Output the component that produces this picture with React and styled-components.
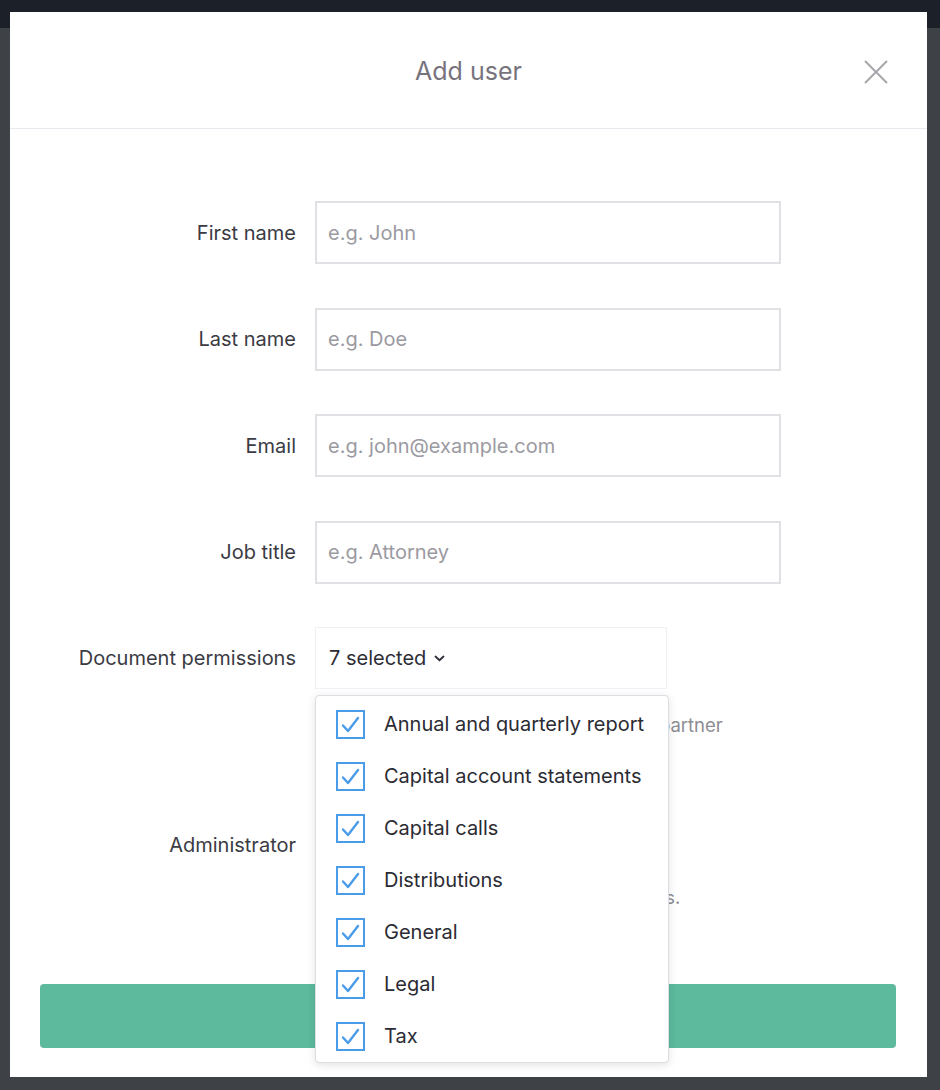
import React from 'react';
import styled, { createGlobalStyle } from 'styled-components';

const GlobalStyle = createGlobalStyle`
  html, body {
    margin: 0;
    padding: 0;
    background: #3e4146;
    font-family: Inter, "Noto Sans", sans-serif;
  }
  * { box-sizing: border-box; }
`;

const Page = styled.div`
  position: relative;
  width: 940px;
  height: 1090px;
  background: #3e4146;
  overflow: hidden;
`;

const TopBar = styled.div`
  height: 28px;
  background: #1c2129;
`;

const Modal = styled.div`
  position: absolute;
  top: 12px;
  left: 10px;
  width: 917px;
  height: 1065px;
  background: #fff;
  display: flex;
  flex-direction: column;
`;

const Header = styled.div`
  height: 117px;
  border-bottom: 1px solid #e7eaee;
  display: flex;
  align-items: center;
  justify-content: center;
  position: relative;
`;

const Title = styled.h2`
  margin: 0;
  font-size: 25px;
  font-weight: 400;
  color: #77737d;
  padding-top: 2px;
`;

const Close = styled.button`
  position: absolute;
  right: 39px;
  top: 48px;
  width: 24px;
  height: 24px;
  padding: 0;
  border: 0;
  background: none;
  cursor: pointer;
`;

const Body = styled.div`
  padding: ${p => p.$pt}px 30px 0 20px;
  display: flex;
  flex-direction: column;
  gap: 43.5px;
`;

const Row = styled.div`
  display: grid;
  grid-template-columns: 266px auto;
  column-gap: 19px;
  align-items: ${p => (p.$top ? 'start' : 'center')};
`;

const Label = styled.label`
  text-align: right;
  font-size: 20px;
  color: #3b3b44;
  padding-top: ${p => p.$pt || 0}px;
`;

const Input = styled.input`
  width: 466px;
  height: 63px;
  border: 2px solid #e1e1e5;
  padding: 0 11px;
  font-family: inherit;
  font-size: 20px;
  color: #2d2d36;
  outline: none;
  &::placeholder { color: #9b9aa1; }
`;

const Field = styled.div`
  position: relative;
`;

const Select = styled.div`
  width: 352px;
  height: 62px;
  border: 1px solid #f0f0f2;
  display: flex;
  align-items: center;
  gap: 8px;
  padding-left: 13px;
  font-size: 20px;
  color: #2d2d36;
`;

const Note = styled.div`
  margin-top: 24px;
  font-size: 18.5px;
  color: #8d8c93;
  line-height: 24px;
`;

const Dropdown = styled.ul`
  position: absolute;
  top: 68px;
  left: 0;
  width: 354px;
  margin: 0;
  padding: 2px 0 0;
  list-style: none;
  background: #fff;
  border: 1px solid #dcdde2;
  border-radius: 4px;
  box-shadow: 0 2px 8px rgba(0, 0, 0, 0.12);
  z-index: 2;
`;

const Option = styled.li`
  height: 52px;
  display: flex;
  align-items: center;
  gap: 19px;
  padding-left: 20px;
  font-size: 20px;
  color: #2b2b33;
`;

const Box = styled.span`
  width: 29px;
  height: 29px;
  border: 2px solid #4a9be8;
  display: flex;
  align-items: center;
  justify-content: center;
`;

const Toggle = styled.div`
  width: 52px;
  height: 30px;
  border-radius: 15px;
  background: #dfe1e6;
  margin-top: 8px;
`;

const Desc = styled.div`
  margin-top: 24px;
  font-size: 18.3px;
  color: #8d8c93;
  line-height: 24px;
`;

const Submit = styled.button`
  margin: 75px 31px 0 30px;
  height: 64px;
  border: 0;
  border-radius: 4px;
  background: #5dba9c;
  color: #fff;
  font-family: inherit;
  font-size: 20px;
`;

const Check = () => (
  <svg width="19" height="17" viewBox="0 0 19 17" fill="none">
    <path d="M2 9.5 L7 15 L17 2" stroke="#4a9be8" strokeWidth="2.4" strokeLinecap="round" strokeLinejoin="round" />
  </svg>
);

const options = [
  'Annual and quarterly report',
  'Capital account statements',
  'Capital calls',
  'Distributions',
  'General',
  'Legal',
  'Tax',
];

const fields = [
  { label: 'First name', placeholder: 'e.g. John' },
  { label: 'Last name', placeholder: 'e.g. Doe' },
  { label: 'Email', placeholder: 'e.g. john@example.com' },
  { label: 'Job title', placeholder: 'e.g. Attorney' },
];

export default function App() {
  return (
    <Page>
      <GlobalStyle />
      <TopBar />
      <Modal>
        <Header>
          <Title>Add user</Title>
          <Close aria-label="Close">
            <svg width="24" height="24" viewBox="0 0 24 24">
              <path d="M1 1 L23 23 M23 1 L1 23" stroke="#a7a7ac" strokeWidth="2" />
            </svg>
          </Close>
        </Header>
        <Body $pt={72}>
          {fields.map(f => (
            <Row key={f.label}>
              <Label>{f.label}</Label>
              <Input placeholder={f.placeholder} />
            </Row>
          ))}
          <Row $top>
            <Label $pt={19}>Document permissions</Label>
            <Field>
              <Select>
                7 selected
                <svg width="11" height="7" viewBox="0 0 11 7">
                  <path d="M1.5 1.5 L5.5 5.2 L9.5 1.5" stroke="#2d2d36" strokeWidth="1.8" fill="none" strokeLinecap="round" />
                </svg>
              </Select>
              <Note>Documents are shared with this limited partner</Note>
              <Dropdown>
                {options.map(o => (
                  <Option key={o}>
                    <Box><Check /></Box>
                    {o}
                  </Option>
                ))}
              </Dropdown>
            </Field>
          </Row>
        </Body>
        <Body $pt={86}>
          <Row $top>
            <Label $pt={10}>Administrator</Label>
            <Field>
              <Toggle />
              <Desc>Administrators can add and remove users.</Desc>
            </Field>
          </Row>
        </Body>
        <Submit>Add user</Submit>
      </Modal>
    </Page>
  );
}
